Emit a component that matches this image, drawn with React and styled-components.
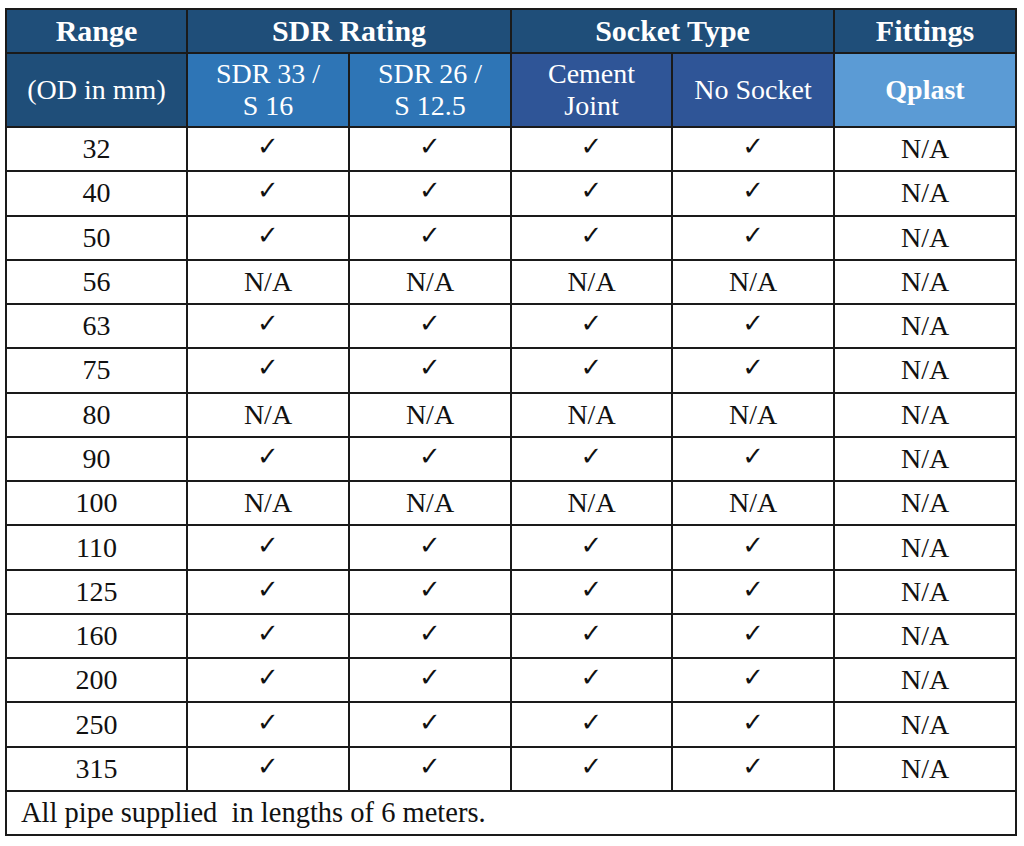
import styled, { createGlobalStyle } from "styled-components";

const GlobalStyle = createGlobalStyle`
  body {
    margin: 0;
    background: #ffffff;
  }
`;

const sizes = ["32", "40", "50", "56", "63", "75", "80", "90", "100", "110", "125", "160", "200", "250", "315"];
const missing = ["56", "80", "100"];

const serif = `"Liberation Serif", "Times New Roman", serif`;

const Page = styled.div`
  padding: 8px 0 0 5px;
`;

const Table = styled.table`
  width: 1010px;
  table-layout: fixed;
  border-collapse: collapse;
  border: 2px solid #1a1a1a;
  font-family: ${serif};
  color: #111111;
`;

const GroupCell = styled.th`
  height: 42px;
  padding: 0;
  background: #1f4e79;
  color: #ffffff;
  font-family: ${serif};
  font-size: 30px;
  font-weight: 700;
  text-align: center;
  border: 2px solid #1a1a1a;
`;

const SubCell = styled.th`
  height: 72px;
  padding: 0;
  background: ${(p) => p.$bg};
  color: #ffffff;
  font-family: ${serif};
  font-size: 28px;
  font-weight: ${(p) => (p.$bold ? 700 : 400)};
  line-height: 32px;
  text-align: center;
  border: 2px solid #1a1a1a;
`;

const Row = styled.tr`
  height: 44.27px;
`;

const Cell = styled.td`
  padding: 0;
  font-family: ${serif};
  font-size: 28px;
  text-align: center;
  vertical-align: middle;
  border: 2px solid #1a1a1a;
`;

const Check = styled.span`
  display: inline-block;
  font-family: "DejaVu Sans", sans-serif;
  font-size: 26px;
  line-height: 1;
  transform: translateY(-3px);
`;

const Note = styled.td`
  height: 42px;
  padding: 0 0 0 14px;
  font-family: ${serif};
  font-size: 28.5px;
  text-align: left;
  white-space: pre;
  border: 2px solid #1a1a1a;
`;

const Mark = ({ ok }) => (ok ? <Check>✓</Check> : "N/A");

export default function App() {
  return (
    <Page>
      <GlobalStyle />
      <Table>
        <colgroup>
          <col style={{ width: 181 }} />
          <col style={{ width: 162 }} />
          <col style={{ width: 162 }} />
          <col style={{ width: 161 }} />
          <col style={{ width: 162 }} />
          <col style={{ width: 182 }} />
        </colgroup>
        <thead>
          <tr>
            <GroupCell>Range</GroupCell>
            <GroupCell colSpan={2}>SDR Rating</GroupCell>
            <GroupCell colSpan={2}>Socket Type</GroupCell>
            <GroupCell>Fittings</GroupCell>
          </tr>
          <tr>
            <SubCell $bg="#1f4e79">(OD in mm)</SubCell>
            <SubCell $bg="#2e75b6">
              SDR 33 /<br />S 16
            </SubCell>
            <SubCell $bg="#2e75b6">
              SDR 26 /<br />S 12.5
            </SubCell>
            <SubCell $bg="#2f5597">
              Cement<br />Joint
            </SubCell>
            <SubCell $bg="#2f5597">No Socket</SubCell>
            <SubCell $bg="#5b9bd5" $bold>
              Qplast
            </SubCell>
          </tr>
        </thead>
        <tbody>
          {sizes.map((s) => {
            const ok = !missing.includes(s);
            return (
              <Row key={s}>
                <Cell>{s}</Cell>
                <Cell><Mark ok={ok} /></Cell>
                <Cell><Mark ok={ok} /></Cell>
                <Cell><Mark ok={ok} /></Cell>
                <Cell><Mark ok={ok} /></Cell>
                <Cell>N/A</Cell>
              </Row>
            );
          })}
          <tr>
            <Note colSpan={6}>All pipe supplied  in lengths of 6 meters.</Note>
          </tr>
        </tbody>
      </Table>
    </Page>
  );
}
